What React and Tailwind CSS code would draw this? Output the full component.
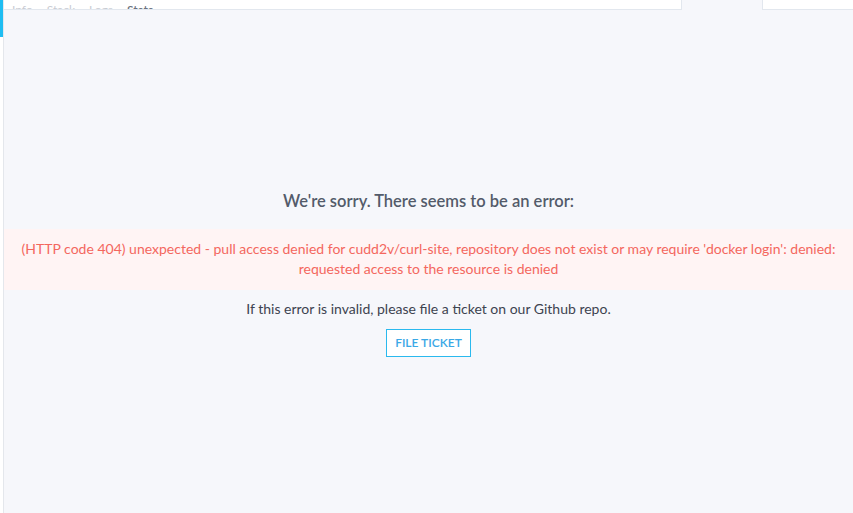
export default function App() {
  const tabs = ['Info', 'Stack', 'Logs', 'Stats']

  return (
    <div className="h-[513px] w-full flex bg-[#f6f7fb] overflow-hidden" style={{ fontFamily: '"Segoe UI", Lato, "Open Sans", sans-serif' }}>
      {/* Side accent */}
      <div className="w-[3px] shrink-0 bg-white">
        <div className="h-[37px] bg-[#1fbdf2]" />
      </div>

      <div className="flex-1 flex flex-col border-l border-[#e4e7ec] min-w-0">
        {/* Cut-off top bar */}
        <div className="flex h-[10px] shrink-0">
          <div className="w-[678px] bg-white border-b border-r border-[#e2e7ee] overflow-hidden flex items-end gap-[14px] px-[8px]">
            {tabs.map((t, i) => (
              <span
                key={t}
                className={`text-[12px] leading-[16px] -mb-[9px] ${i === tabs.length - 1 ? 'text-[#6b7280] font-semibold' : 'text-[#c9ccd3]'}`}
              >
                {t}
              </span>
            ))}
          </div>
          <div className="w-[80px]" />
          <div className="flex-1 bg-white border-b border-l border-[#e2e7ee]" />
        </div>

        {/* Error message */}
        <div className="pt-[179px] flex flex-col items-center text-center">
          <h2 className="text-[16.5px] leading-[24px] font-semibold text-[#535b6a]">
            We're sorry. There seems to be an error:
          </h2>
          <div className="mt-4 w-full bg-[#fff4f4] pt-[10px] pb-[11px] px-3">
            <p className="text-[14px] leading-[20px] text-[#f4675e]">
              (HTTP code 404) unexpected - pull access denied for cudd2v/curl-site, repository does not exist or may require 'docker login': denied: requested access to the resource is denied
            </p>
          </div>
          <p className="mt-[9px] text-[14px] leading-[20px] text-[#3d4350]">
            If this error is invalid, please file a ticket on our Github repo.
          </p>
          <button className="mt-[10px] h-[28px] px-[8px] border border-[#2ab9ee] bg-white text-[12px] font-semibold uppercase text-[#3aa8e6]">
            File Ticket
          </button>
        </div>
      </div>
    </div>
  )
}
